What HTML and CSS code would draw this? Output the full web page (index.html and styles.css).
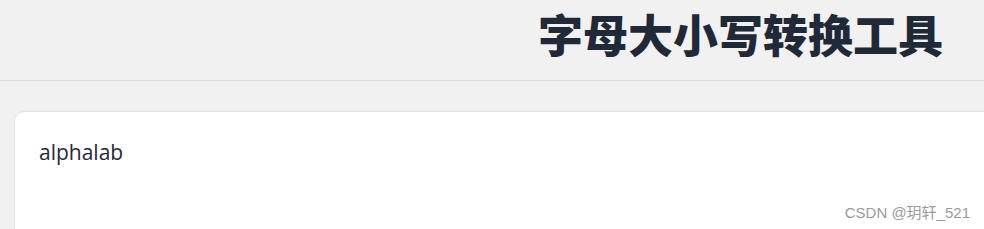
FILE: index.html
```html
<!DOCTYPE html>
<html lang="zh-CN">
<head>
    <meta charset="UTF-8">
    <meta name="viewport" content="width=device-width, initial-scale=1.0">
    <title>字母大小写转换工具</title>
    <link rel="stylesheet" href="styles.css">
</head>
<body>
    <div class="header">
        <h1>字母大小写转换工具</h1>
    </div>
    <div class="main">
        <div class="card">
            <p class="text">alphalab</p>
        </div>
    </div>
    <div class="mark">CSDN @玥轩_521</div>
</body>
</html>
```

FILE: styles.css
```css
* { margin: 0; padding: 0; box-sizing: border-box; }
html, body { height: 100%; overflow: hidden; }
body {
    background-color: #F1F1F1;
    font-family: "Open Sans", "Noto Sans", "Noto Sans CJK SC", sans-serif;
    color: #1F2937;
}

div.header {
    display: flex;
    justify-content: flex-end;
    align-items: center;
    height: 81px;
    padding-right: 41px;
    border-bottom: 1px solid #DCDCDC;
}
div.header h1 {
    font-family: "Noto Sans CJK SC", sans-serif;
    font-size: 45px;
    font-weight: 900;
    line-height: 1;
    margin-top: -14px;
    color: #1F2937;
}

div.main { padding: 30px 0 0 14px; }
div.card {
    width: 1000px; height: 118px;
    background-color: #FFF;
    border: 1px solid #E3E3E3;
    border-bottom: 0;
    border-radius: 10px 10px 0 0;
    padding: 26px 24px;
}
p.text {
    font-size: 21px;
    line-height: 28px;
}

div.mark {
    position: absolute;
    right: 14px; bottom: 7px;
    font-family: "Liberation Sans", "Noto Sans CJK SC", sans-serif;
    font-size: 15px;
    color: #9A9A9A;
}
```
